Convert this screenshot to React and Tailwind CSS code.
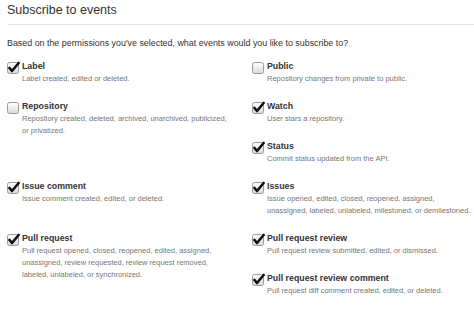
import React from 'react';

const Box = ({ checked }) => (
  <svg width="14" height="14" viewBox="0 0 14 14" className="shrink-0 mt-[1px] -ml-[1px] mr-[2px]">
    <defs>
      <linearGradient id="cbg" x1="0" y1="0" x2="0" y2="1">
        <stop offset="0" stopColor="#ffffff" />
        <stop offset="1" stopColor="#d9d9d9" />
      </linearGradient>
    </defs>
    <rect x="1.5" y="1.5" width="11" height="11" rx="2" fill="url(#cbg)" stroke="#9b9b9b" strokeWidth="1" />
    {checked && (
      <path d="M3.5 7 L6 10 L12.6 2" fill="none" stroke="#111" strokeWidth="2.6" strokeLinecap="round" strokeLinejoin="round" />
    )}
  </svg>
);

const Item = ({ title, lines, checked }) => (
  <div className="flex pb-[15px]">
    <Box checked={checked} />
    <div>
      <div className="text-[8.8px] leading-[13px] font-bold text-[#333]">{title}</div>
      {lines.map((l, i) => (
        <div key={i} className="text-[7.5px] leading-[12px] text-[#777] whitespace-nowrap">{l}</div>
      ))}
    </div>
  </div>
);

export default function App() {
  return (
    <div className="w-[474px] h-[313px] overflow-hidden bg-white pl-[7px] font-['Liberation_Sans',Arial,sans-serif]">
      <h2 className="pt-[2px] text-[12.5px] leading-[16px] text-[#333]">Subscribe to events</h2>
      <div className="mt-[6px] border-t border-[#e5e5e5]" />
      <p className="mt-[12px] text-[8.9px] leading-[12px] text-[#333]">
        Based on the permissions you've selected, what events would you like to subscribe to?
      </p>

      <div className="mt-[11px] grid grid-cols-[245px_1fr]">
        <div>
          <Item checked title="Label" lines={['Label created, edited or deleted.']} />
        </div>
        <div>
          <Item title="Public" lines={['Repository changes from private to public.']} />
        </div>

        <div>
          <Item
            title="Repository"
            lines={['Repository created, deleted, archived, unarchived, publicized,', 'or privatized.']}
          />
        </div>
        <div>
          <Item checked title="Watch" lines={['User stars a repository.']} />
          <Item checked title="Status" lines={['Commit status updated from the API.']} />
        </div>

        <div>
          <Item checked title="Issue comment" lines={['Issue comment created, edited, or deleted.']} />
        </div>
        <div>
          <Item
            checked
            title="Issues"
            lines={[
              'Issue opened, edited, closed, reopened, assigned,',
              'unassigned, labeled, unlabeled, milestoned, or demilestoned.',
            ]}
          />
        </div>

        <div>
          <Item
            checked
            title="Pull request"
            lines={[
              'Pull request opened, closed, reopened, edited, assigned,',
              'unassigned, review requested, review request removed,',
              'labeled, unlabeled, or synchronized.',
            ]}
          />
        </div>
        <div>
          <Item checked title="Pull request review" lines={['Pull request review submitted, edited, or dismissed.']} />
          <Item checked title="Pull request review comment" lines={['Pull request diff comment created, edited, or deleted.']} />
        </div>
      </div>
    </div>
  );
}
